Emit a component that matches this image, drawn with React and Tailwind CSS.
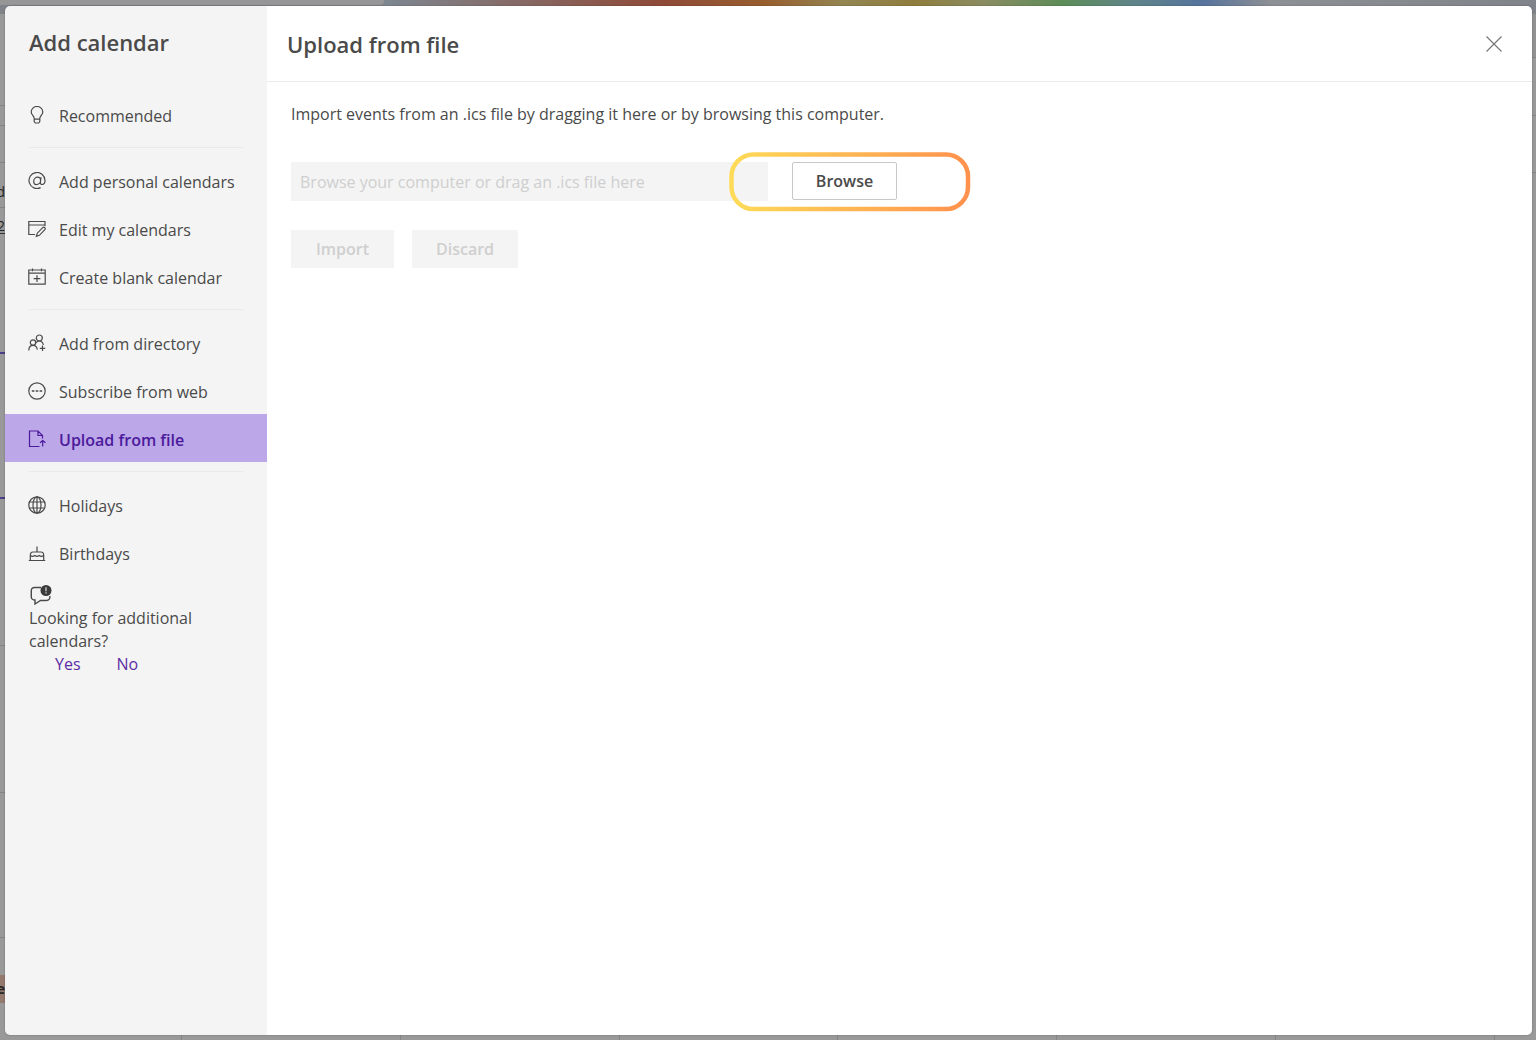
import React, { useState } from 'react';

const iconProps = {
    width: 18,
    height: 18,
    viewBox: '0 0 18 18',
    fill: 'none',
    stroke: 'currentColor',
    strokeWidth: 1.2,
    'aria-hidden': true
};

const icons = {
    bulb: (
        <svg {...iconProps}>
            <path d="M6.200 12.500C6.200 9.900 3.200 8.900 3.200 6A5.800 5.500 0 0 1 14.800 6C14.800 8.900 11.800 9.900 11.800 12.500V15.500L10.700 17H7.300L6.200 15.500ZM6.200 13.200H11.800" />
        </svg>
    ),
    at: (
        <svg {...iconProps}>
            <path d="M12.600 15.600A8 8 0 1 1 17 8.600C17 11.200 15.700 12.500 14.200 12.500C12.800 12.500 12.200 11.500 12.400 10.200L13 5.300M12.600 8.200C12.600 6.300 11.500 5.200 9.800 5.200C7.600 5.200 5.700 7 5.700 9.500C5.700 11.400 6.700 12.600 8.300 12.600C10.700 12.600 12.600 10.600 12.600 8.200Z" />
        </svg>
    ),
    edit: (
        <svg {...iconProps}>
            <path d="M7 14.500H.8V1.500H17V6M.8 5H17M16.800 7.700C16.200 7 15.300 7 14.700 7.600L9.300 13.200L8.300 16.300L11.400 15.300L16.800 9.700C17.300 9.100 17.300 8.300 16.800 7.700Z" />
        </svg>
    ),
    create: (
        <svg {...iconProps}>
            <path d="M.8 2H17.200V16.200H.8ZM.8 5.200H17.200M4.500.5V3.200M13.500.5V3.200M9 7.300V14.100M5.600 10.700H12.400" />
        </svg>
    ),
    directory: (
        <svg {...iconProps}>
            <circle cx="11.300" cy="4" r="3" />
            <circle cx="5" cy="8.600" r="2.700" />
            <path d="M.8 16.400C.8 13.300 2.600 11.300 5 11.300S9 12.900 9.300 15.600M7.800 9C8.600 7.700 9.800 7 11.300 7C13.500 7 14.900 8.600 15.400 11M14.500 11.500V17M11.800 14.300H17.200" />
        </svg>
    ),
    web: (
        <svg {...iconProps}>
            <circle cx="9" cy="9" r="8.200" />
            <path d="M3.800 9H6.400M7.700 9H10.300M11.600 9H14.200" strokeWidth="1.600" />
        </svg>
    ),
    upload: (
        <svg {...iconProps}>
            <path d="M11.500 16.500H1.500V1H10L14.500 5.500V8.500M10 1V5.500H14.500M14.700 16.500V11M12 12.800L14.700 10.500L17.400 12.800" />
        </svg>
    ),
    globe: (
        <svg {...iconProps}>
            <circle cx="9" cy="9" r="8.200" />
            <ellipse cx="9" cy="9" rx="4" ry="8.200" />
            <path d="M9 .8V17.200M1.700 6H16.300M1.700 12H16.300" />
        </svg>
    ),
    cake: (
        <svg {...iconProps}>
            <path d="M.8 16.500H17.200M2.300 16.500V11.500Q2.300 8 5 8H13Q15.700 8 15.700 11.500V16.500M9 2.500V8M2.300 11.500C3.800 12.700 5.300 12.700 6.800 11.500C8.200 12.700 9.800 12.700 11.200 11.500C12.700 12.700 14.200 12.700 15.700 11.500" />
        </svg>
    )
};

const menuGroups = [
    [{ id: 'recommended', label: 'Recommended', icon: 'bulb' }],
    [
        { id: 'personal', label: 'Add personal calendars', icon: 'at' },
        { id: 'edit', label: 'Edit my calendars', icon: 'edit' },
        { id: 'blank', label: 'Create blank calendar', icon: 'create' }
    ],
    [
        { id: 'directory', label: 'Add from directory', icon: 'directory' },
        { id: 'web', label: 'Subscribe from web', icon: 'web' },
        { id: 'file', label: 'Upload from file', icon: 'upload' }
    ],
    [
        { id: 'holidays', label: 'Holidays', icon: 'globe' },
        { id: 'birthdays', label: 'Birthdays', icon: 'cake' }
    ]
];

// Dimmed calendar page that shows around the edges of the dialog
function Backdrop() {
    return (
        <div className="absolute inset-0 flex flex-col overflow-hidden bg-[#999999]" aria-hidden="true">
            <div className="flex h-[14px] shrink-0 bg-[#808389]">
                <div className="h-[5px] w-1/4 rounded-br bg-[#969696]" />
                <div className="h-[6px] flex-1 bg-[linear-gradient(90deg,#7d8791_0%,#8f4a38_24%,#985e2e_33%,#938653_40%,#8f7d3d_46%,#8b8c62_52%,#5c8d58_59%,#5f8589_65%,#56739d_71%,#8d9094_77%,#808389_100%)]" />
            </div>
            <div className="flex flex-1 justify-between">
                <div className="flex w-[5px] flex-col overflow-hidden text-sm leading-none text-[#222222]">
                    <div className="h-[92px] border-b border-[#848484]" />
                    <div className="h-[20px] border-b border-[#848484]" />
                    <div className="h-[37px] border-b border-[#848484]" />
                    <div className="flex h-[45px] items-end justify-end border-b border-[#848484] pb-2">d</div>
                    <div className="flex h-[26px] items-end justify-end border-b border-[#333333]">2</div>
                    <div className="h-[120px] border-b-2 border-[#4a3c85]" />
                    <div className="h-[145px] border-b-2 border-[#4a3c85]" />
                    <div className="h-[147px] border-b border-[#848484]" />
                    <div className="h-[147px] border-b border-[#848484]" />
                    <div className="h-[145px] border-b border-[#848484]" />
                    <div className="h-[37px]" />
                    <div className="flex h-[28px] items-center justify-end bg-[#94796e] font-bold">e</div>
                </div>
                <div className="flex w-[4px] flex-col">
                    <div className="h-[44px] border-b border-[#848484] bg-[#929292]" />
                    <div className="h-[58px] border-b border-[#848484]" />
                    <div className="h-[57px] border-b border-[#848484]" />
                </div>
            </div>
            <div className="grid h-[5px] grid-cols-[182px_repeat(6,1fr)] pr-[41px] [&>div]:border-r [&>div]:border-[#858585]">
                <div />
                <div />
                <div />
                <div />
                <div />
                <div />
                <div />
            </div>
        </div>
    );
}

function Sidebar({ active, onSelect }) {
    return (
        <aside className="w-[262px] shrink-0 bg-[#f4f4f4]">
            <h1 className="px-6 pt-5 text-[22px] leading-8 font-semibold">Add calendar</h1>
            <nav className="mt-8">
                {menuGroups.map((group, index) => (
                    <div key={group[0].id}>
                        {index > 0 && <hr className="mx-6 mt-[9px] mb-2 border-[#eaeaea]" />}
                        {group.map((item) => (
                            <button
                                key={item.id}
                                type="button"
                                onClick={() => onSelect(item.id)}
                                className={
                                    item.id === active
                                        ? 'flex h-12 w-full items-center gap-[13px] bg-[#bca7e8] pt-px pl-[23px] text-left font-semibold text-[#4b1a9c]'
                                        : 'flex h-12 w-full items-center gap-[13px] pt-px pl-[23px] text-left hover:bg-[#eaeaea]'
                                }
                            >
                                {icons[item.icon]}
                                <span className="pt-[2px]">{item.label}</span>
                            </button>
                        ))}
                    </div>
                ))}
            </nav>
            <div className="px-6 pt-[7px]">
                <svg width="24" height="24" viewBox="0 0 24 24" fill="none" aria-hidden="true">
                    <path
                        d="M12 4.500H5.500A3 3 0 0 0 2.300 7.500V14A3 3 0 0 0 5.300 17H6V21L11.500 17.500H17.500A3.500 3.500 0 0 0 20.800 13"
                        stroke="currentColor"
                        strokeWidth="1.400"
                    />
                    <circle cx="17" cy="7.500" r="5.500" fill="#3a3a3a" />
                    <path d="M17 4.300V8.200M17 9.300V10.500" stroke="#dddddd" strokeWidth="1.200" />
                </svg>
                <p className="w-[180px] leading-[23px]">Looking for additional calendars?</p>
                <div className="flex gap-9 pl-[26px] leading-[23px] text-[#5b2da5]">
                    <button type="button">Yes</button>
                    <button type="button">No</button>
                </div>
            </div>
        </aside>
    );
}

function UploadPanel() {
    return (
        <main className="min-w-0 flex-1 bg-white">
            <header className="flex h-[76px] items-center justify-between border-b border-[#eaeaea] pr-[30px] pl-5">
                <h2 className="text-[22px] leading-8 font-semibold">Upload from file</h2>
                <button type="button" aria-label="Close">
                    <svg width="16" height="16" viewBox="0 0 16 16" fill="none" stroke="#777777" strokeWidth="1.200">
                        <path d="M.5.500L15.500 15.500M15.500.500L.5 15.500" />
                    </svg>
                </button>
            </header>
            <form className="px-6 pt-5" onSubmit={(e) => e.preventDefault()}>
                <label htmlFor="ics-file" className="block leading-6">
                    Import events from an .ics file by dragging it here or by browsing this computer.
                </label>
                <div className="relative mt-9 flex w-fit items-start gap-6">
                    <input
                        id="ics-file"
                        type="text"
                        readOnly
                        placeholder="Browse your computer or drag an .ics file here"
                        className="h-[39px] w-[477px] bg-[#f4f4f4] px-[9px] outline-none placeholder:text-[#cfcfcf]"
                    />
                    <button
                        type="button"
                        className="h-[38px] w-[105px] rounded-xs border border-[#c8c8c8] bg-white font-semibold"
                    >
                        Browse
                    </button>
                    {/* highlight ring around the browse button */}
                    <svg
                        className="pointer-events-none absolute -top-[10px] left-[438px]"
                        width="242"
                        height="60"
                        viewBox="0 0 242 60"
                        fill="none"
                        aria-hidden="true"
                    >
                        <defs>
                            <linearGradient id="ring" x1="0" y1="0" x2="1" y2="0">
                                <stop offset="0" stopColor="#ffdb58" />
                                <stop offset="1" stopColor="#ff914d" />
                            </linearGradient>
                        </defs>
                        <rect x="2.500" y="2.500" width="236.500" height="54.500" rx="22" stroke="url(#ring)" strokeWidth="4.500" />
                    </svg>
                </div>
                <div className="mt-[29px] flex gap-[18px] font-semibold text-[#cfcfcf]">
                    <button type="submit" disabled className="h-[38px] w-[103px] bg-[#f4f4f4]">
                        Import
                    </button>
                    <button type="button" disabled className="h-[38px] w-[106px] bg-[#f4f4f4]">
                        Discard
                    </button>
                </div>
            </form>
        </main>
    );
}

function App() {
    const [active, setActive] = useState('file');

    return (
        <div className="relative flex min-h-screen pt-[6px] pr-1 pb-[5px] pl-[5px] font-['Open_Sans',sans-serif] text-base text-[#4a4a4a]">
            <Backdrop />
            <div
                role="dialog"
                aria-label="Add calendar"
                className="relative flex flex-1 overflow-hidden rounded-[5px] shadow-[0_0_2px_rgba(0,0,0,0.3)]"
            >
                <Sidebar active={active} onSelect={setActive} />
                <UploadPanel />
            </div>
        </div>
    );
}

export default App;
